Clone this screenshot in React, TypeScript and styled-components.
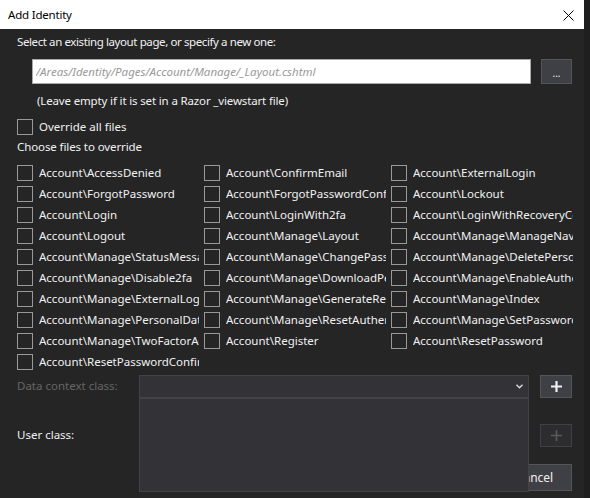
import { createGlobalStyle, styled } from 'styled-components'

const FONT = `'Noto Sans', 'Open Sans', sans-serif`

const files = [
  'Account\\AccessDenied',
  'Account\\ConfirmEmail',
  'Account\\ExternalLogin',
  'Account\\ForgotPassword',
  'Account\\ForgotPasswordConfirmation',
  'Account\\Lockout',
  'Account\\Login',
  'Account\\LoginWith2fa',
  'Account\\LoginWithRecoveryCode',
  'Account\\Logout',
  'Account\\Manage\\Layout',
  'Account\\Manage\\ManageNav',
  'Account\\Manage\\StatusMessage',
  'Account\\Manage\\ChangePassword',
  'Account\\Manage\\DeletePersonalData',
  'Account\\Manage\\Disable2fa',
  'Account\\Manage\\DownloadPersonalData',
  'Account\\Manage\\EnableAuthenticator',
  'Account\\Manage\\ExternalLogins',
  'Account\\Manage\\GenerateRecoveryCodes',
  'Account\\Manage\\Index',
  'Account\\Manage\\PersonalData',
  'Account\\Manage\\ResetAuthenticator',
  'Account\\Manage\\SetPassword',
  'Account\\Manage\\TwoFactorAuthentication',
  'Account\\Register',
  'Account\\ResetPassword',
  'Account\\ResetPasswordConfirmation',
]

const GlobalS = createGlobalStyle`
  html, body {
    margin: 0;
    padding: 0;
    background: #1f1f1f;
    overflow: hidden;
  }
  * {
    box-sizing: border-box;
  }
`

const WindowS = styled.div`
  width: 584px;
  height: 498px;
  display: flex;
  flex-flow: column nowrap;
  font-family: ${FONT};
  font-size: 11.5px;
  color: #f1f1f1;
`

const TitleBarS = styled.div`
  height: 29px;
  flex: none;
  background: #ffffff;
  color: #000000;
  display: flex;
  align-items: center;
  justify-content: space-between;
  padding: 0 10px 0 8px;
  font-size: 11.5px;
  letter-spacing: -0.2px;
`

const CloseS = styled.svg`
  width: 11px;
  height: 11px;
  margin-top: 1px;
`

const BodyS = styled.div`
  flex: 1;
  background: #252526;
  padding: 5px 12px 0 17px;
  display: flex;
  flex-flow: column nowrap;
`

const TextS = styled.div<{ $indent?: number; $top?: number; $tight?: number }>`
  line-height: 16px;
  height: 16px;
  white-space: nowrap;
  padding-left: ${({ $indent }) => $indent ?? 0}px;
  margin-top: ${({ $top }) => $top ?? 0}px;
  letter-spacing: ${({ $tight }) => -($tight ?? 0)}px;
`

const PathRowS = styled.div`
  display: flex;
  align-items: center;
  gap: 10px;
  margin-top: 9px;
  padding-left: 15px;
`

const PathInputS = styled.input`
  width: 499px;
  height: 25px;
  border: 1px solid #a8a8a8;
  background: #ffffff;
  padding: 0 3px;
  font-family: ${FONT};
  font-size: 11.5px;
  font-style: italic;
  outline: none;

  &::placeholder {
    color: #9a9a9a;
  }
`

const DarkButtonS = styled.button<{ $w: number; $h: number; $disabled?: boolean }>`
  width: ${({ $w }) => $w}px;
  height: ${({ $h }) => $h}px;
  flex: none;
  padding: 0;
  display: flex;
  align-items: center;
  justify-content: center;
  background: ${({ $disabled }) => ($disabled ? '#2d2d30' : '#3f3f46')};
  border: 1px solid ${({ $disabled }) => ($disabled ? '#3f3f46' : '#555555')};
  color: ${({ $disabled }) => ($disabled ? '#5a5a5a' : '#f1f1f1')};
  font-family: ${FONT};
  font-size: 12px;
`

const DotsS = styled.span`
  font-size: 10px;
  line-height: 1;
  margin-top: 2px;
`

const CheckRowS = styled.label<{ $top?: number }>`
  display: flex;
  align-items: center;
  height: 16px;
  margin-top: ${({ $top }) => $top ?? 0}px;
`

const BoxS = styled.span`
  width: 16px;
  height: 16px;
  flex: none;
  border: 1px solid #999999;
`

const CheckLabelS = styled.span<{ $w?: number }>`
  margin-left: 6px;
  line-height: 16px;
  white-space: nowrap;
  overflow: hidden;
  ${({ $w }) => ($w ? `width: ${$w}px;` : '')}
`

const GridS = styled.div`
  display: grid;
  grid-template-columns: repeat(3, 187px);
  row-gap: 5px;
  margin-top: 10px;
`

const FieldRowS = styled.div<{ $top: number }>`
  display: flex;
  align-items: center;
  height: 23px;
  margin-top: ${({ $top }) => $top}px;
`

const FieldLabelS = styled.div<{ $muted?: boolean }>`
  width: 122px;
  flex: none;
  margin-top: -2px;
  color: ${({ $muted }) => ($muted ? '#656565' : '#f1f1f1')};
`

const ComboS = styled.div`
  position: relative;
  width: 390px;
  height: 23px;
  margin-right: 11px;
  background: #333337;
  border: 1px solid #434346;
`

const ChevronS = styled.svg`
  position: absolute;
  right: 5px;
  top: 8px;
  width: 7px;
  height: 5px;
`

const PopupS = styled.div`
  position: absolute;
  left: -1px;
  top: 21px;
  width: 390px;
  height: 95px;
  background: #333337;
  border: 1px solid #434346;
  border-top: 2px solid #434346;
  z-index: 2;
`

const PlusS = styled.svg`
  width: 11px;
  height: 11px;
`

const FooterS = styled.div`
  display: flex;
  justify-content: flex-end;
  margin-top: 17px;
`

const Plus = ({ bold }: { bold?: boolean }) => (
  <PlusS viewBox="0 0 11 11">
    <path d="M5.5 0v11M0 5.5h11" stroke="currentColor" strokeWidth={bold ? 2.2 : 1.6} />
  </PlusS>
)

export default function App() {
  return (
    <>
      <GlobalS />
      <WindowS>
        <TitleBarS>
          <span>Add Identity</span>
          <CloseS viewBox="0 0 11 11">
            <path d="M0.5 0.5l10 10M10.5 0.5l-10 10" stroke="#000" strokeWidth="1" />
          </CloseS>
        </TitleBarS>
        <BodyS>
          <TextS $tight={0.4}>Select an existing layout page, or specify a new one:</TextS>
          <PathRowS>
            <PathInputS placeholder="/Areas/Identity/Pages/Account/Manage/_Layout.cshtml" />
            <DarkButtonS $w={31} $h={25}>
              <DotsS>...</DotsS>
            </DarkButtonS>
          </PathRowS>
          <TextS $indent={20} $top={9} $tight={0.15}>
            (Leave empty if it is set in a Razor _viewstart file)
          </TextS>
          <CheckRowS $top={10}>
            <BoxS />
            <CheckLabelS>Override all files</CheckLabelS>
          </CheckRowS>
          <TextS $top={4} $tight={0.1}>
            Choose files to override
          </TextS>
          <GridS>
            {files.map((f) => (
              <CheckRowS key={f}>
                <BoxS />
                <CheckLabelS $w={160}>{f}</CheckLabelS>
              </CheckRowS>
            ))}
          </GridS>
          <FieldRowS $top={5}>
            <FieldLabelS $muted>Data context class:</FieldLabelS>
            <ComboS>
              <ChevronS viewBox="0 0 7 5">
                <path d="M0.5 0.8l3 3 3-3" stroke="#e0e0e0" strokeWidth="1.3" fill="none" />
              </ChevronS>
              <PopupS />
            </ComboS>
            <DarkButtonS $w={32} $h={23}>
              <Plus bold />
            </DarkButtonS>
          </FieldRowS>
          <FieldRowS $top={26}>
            <FieldLabelS>User class:</FieldLabelS>
            <ComboS />
            <DarkButtonS $w={32} $h={23} $disabled>
              <Plus />
            </DarkButtonS>
          </FieldRowS>
          <FooterS>
            <DarkButtonS $w={75} $h={27}>
              Cancel
            </DarkButtonS>
          </FooterS>
        </BodyS>
      </WindowS>
    </>
  )
}
